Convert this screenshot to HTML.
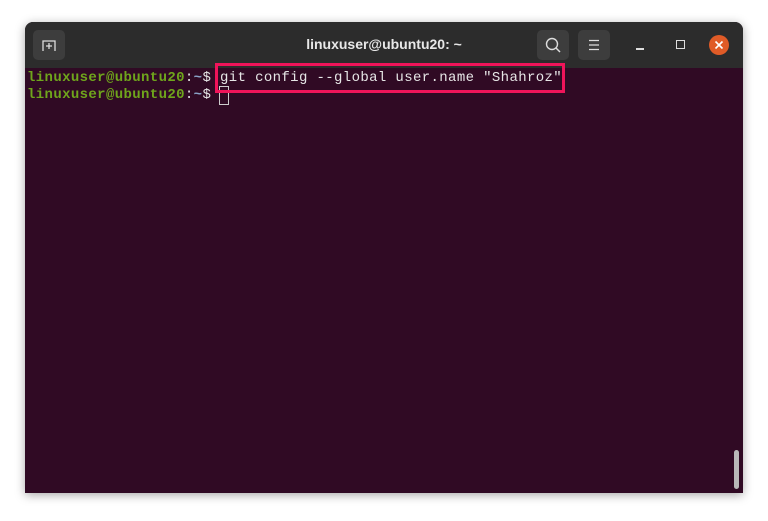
<!DOCTYPE html>
<html><head><style>
body{margin:0;width:768px;height:521px;background:#fff;position:relative;overflow:hidden;font-family:"Liberation Sans",sans-serif}
.win{position:absolute;left:25px;top:22px;width:718px;height:471px;border-radius:8px 8px 0 0;overflow:hidden;box-shadow:0 2px 10px rgba(0,0,0,.35);background:#300a24}
.hdr{position:absolute;left:0;top:0;width:718px;height:46px;background:#2c2c2c}
.btn{position:absolute;top:8px;width:32px;height:30px;border-radius:5px;background:#3d3d3d}
.title{position:absolute;left:0;width:718px;top:14px;text-align:center;color:#e8e8e8;font-weight:bold;font-size:14px}
.term{position:absolute;left:2px;top:48px;font-family:"Liberation Mono",monospace;font-size:14px;letter-spacing:0.37px;line-height:17px;color:#e6e6e6;white-space:pre}
.g{color:#6fa51c;font-weight:bold}.b{color:#8aa4c8;font-weight:bold}
</style></head><body>
<div class="win">
<div class="hdr">
<div class="btn" style="left:8px"><svg width="32" height="30"><path d="M10 21V11h12v10M16 13v6M13 16h6" stroke="#ddd" stroke-width="1.3" fill="none"/></svg></div>
<div class="title">linuxuser@ubuntu20: ~</div>
<div class="btn" style="left:512px"><svg width="32" height="30"><circle cx="15" cy="14" r="5.5" stroke="#ddd" stroke-width="1.4" fill="none"/><path d="M19 18l4 4" stroke="#ddd" stroke-width="1.5"/></svg></div>
<div class="btn" style="left:553px"><svg width="32" height="30"><path d="M11 10.5h10M11 15h10M11 19.5h10" stroke="#ddd" stroke-width="1.3"/></svg></div>
<div style="position:absolute;left:611px;top:26px;width:8px;height:1.5px;background:#ddd"></div>
<div style="position:absolute;left:651px;top:18px;width:7px;height:7px;border:1.3px solid #ddd"></div>
<div style="position:absolute;left:684px;top:13px;width:20px;height:20px;border-radius:50%;background:#e05b27"><svg width="20" height="20"><path d="M6.5 6.5l7 7M13.5 6.5l-7 7" stroke="#fff" stroke-width="1.6"/></svg></div>
</div>
<div class="term"><span class="g">linuxuser@ubuntu20</span>:<span class="b">~</span>$ git config --global user.name "Shahroz"
<span class="g">linuxuser@ubuntu20</span>:<span class="b">~</span>$ </div>
<div style="position:absolute;left:194px;top:64px;width:10px;height:19px;border:1px solid #ccc;box-sizing:border-box"></div>
<div style="position:absolute;left:190px;top:41px;width:350px;height:30px;border:3px solid #f0145a;box-sizing:border-box"></div>
<div style="position:absolute;left:709px;top:428px;width:5px;height:39px;border-radius:3px;background:#b8b8b8"></div>
</div>
</body></html>
